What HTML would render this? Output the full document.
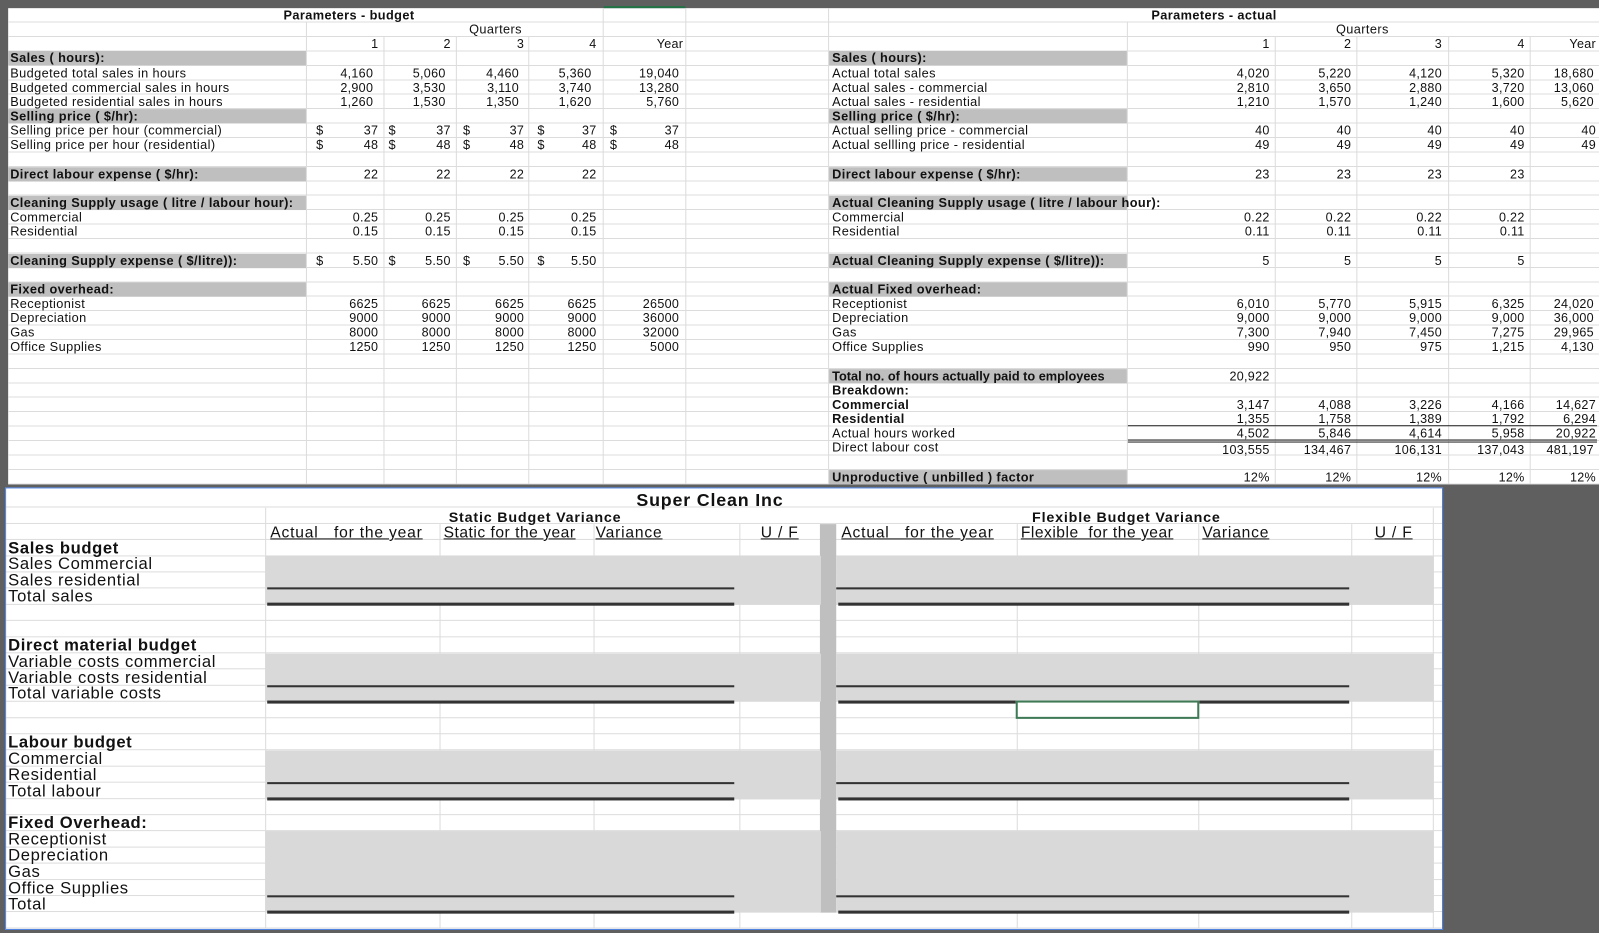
<!DOCTYPE html>
<html><head><meta charset="utf-8"><style>
*{margin:0;padding:0;box-sizing:border-box}
body{width:1599px;height:933px;background:#5f5f5f;position:relative;overflow:hidden;font-family:"Liberation Sans",sans-serif;color:#111}
#w{position:absolute;left:0;top:0;width:1568px;height:915px;transform:scale(1.0198,1.0197);transform-origin:0 0}
.a{position:absolute;white-space:nowrap}
#top{position:absolute;left:8px;top:8px;width:1560px;height:467px;background:#fff;background-image:repeating-linear-gradient(to bottom,transparent 0,transparent 13.15px,#dcdcdc 13.15px,#dcdcdc 14.15px)}
.t{position:absolute;white-space:nowrap;font-size:12.5px;letter-spacing:.4px;line-height:14px;height:14px}
.r{position:absolute;white-space:nowrap;font-size:12.3px;letter-spacing:.3px;line-height:14px;height:14px;width:80px;text-align:right}
.b{font-weight:bold}
.g{position:absolute;background:#bfbfbf;height:14px}
.v{position:absolute;width:1px;background:#dcdcdc}
#bot{position:absolute;left:5px;top:478px;width:1410px;height:434px;background:#fff;border:1px solid #4a7fe0;background-image:repeating-linear-gradient(to bottom,transparent 0,transparent 14.87px,#dcdcdc 14.87px,#dcdcdc 15.87px);background-position:0 3px}
.L{position:absolute;white-space:nowrap;font-size:16.3px;letter-spacing:.6px;line-height:16px;left:8px}
.gb{position:absolute;background:#d9d9d9}
.hl{position:absolute;height:1.5px;background:#333}
.hk{position:absolute;height:3px;background:#333}
.u{text-decoration:underline}
.h{font-size:15.3px;letter-spacing:.8px;line-height:16px}
</style></head><body><div id="w">
<div id="top"></div>
<div class="v" style="left:300px;top:22px;height:453px"></div>
<div class="v" style="left:376px;top:36px;height:439px"></div>
<div class="v" style="left:447px;top:36px;height:439px"></div>
<div class="v" style="left:518px;top:36px;height:439px"></div>
<div class="v" style="left:591px;top:8px;height:467px"></div>
<div class="v" style="left:672px;top:8px;height:467px"></div>
<div class="v" style="left:812px;top:8px;height:467px"></div>
<div class="v" style="left:1105px;top:22px;height:453px"></div>
<div class="v" style="left:1250px;top:36px;height:439px"></div>
<div class="v" style="left:1330px;top:36px;height:439px"></div>
<div class="v" style="left:1420px;top:36px;height:439px"></div>
<div class="v" style="left:1500px;top:36px;height:439px"></div>
<div class="a" style="left:592px;top:6px;width:80px;height:2px;background:#217346"></div>
<div class="g" style="left:8px;top:50px;width:292px"></div>
<div class="g" style="left:8px;top:107px;width:292px"></div>
<div class="g" style="left:8px;top:164px;width:292px"></div>
<div class="g" style="left:8px;top:192px;width:292px"></div>
<div class="g" style="left:8px;top:249px;width:292px"></div>
<div class="g" style="left:8px;top:277px;width:292px"></div>
<div class="g" style="left:813px;top:50px;width:292px"></div>
<div class="g" style="left:813px;top:107px;width:292px"></div>
<div class="g" style="left:813px;top:164px;width:292px"></div>
<div class="g" style="left:813px;top:192px;width:292px"></div>
<div class="g" style="left:813px;top:249px;width:292px"></div>
<div class="g" style="left:813px;top:277px;width:292px"></div>
<div class="g" style="left:813px;top:362px;width:292px"></div>
<div class="g" style="left:813px;top:461px;width:292px"></div>

<div class="t b" style="left:278px;top:8px">Parameters - budget</div>
<div class="t" style="left:460px;top:22px">Quarters</div>
<div class="r" style="left:291px;top:36px">1</div><div class="r" style="left:362px;top:36px">2</div><div class="r" style="left:434px;top:36px">3</div><div class="r" style="left:505px;top:36px">4</div><div class="r" style="left:590px;top:36px">Year</div>
<div class="t b" style="left:10px;top:50px">Sales ( hours):</div>
<div class="t" style="left:10px;top:65px">Budgeted total sales in hours</div>
<div class="t" style="left:10px;top:79px">Budgeted commercial sales in hours</div>
<div class="t" style="left:10px;top:93px">Budgeted residential sales in hours</div>
<div class="t b" style="left:10px;top:107px">Selling price ( $/hr):</div>
<div class="t" style="left:10px;top:121px">Selling price per hour (commercial)</div>
<div class="t" style="left:10px;top:135px">Selling price per hour (residential)</div>
<div class="t b" style="left:10px;top:164px">Direct labour expense ( $/hr):</div>
<div class="t b" style="left:10px;top:192px">Cleaning Supply usage ( litre / labour hour):</div>
<div class="t" style="left:10px;top:206px">Commercial</div>
<div class="t" style="left:10px;top:220px">Residential</div>
<div class="t b" style="left:10px;top:249px">Cleaning Supply expense ( $/litre)):</div>
<div class="t b" style="left:10px;top:277px">Fixed overhead:</div>
<div class="t" style="left:10px;top:291px">Receptionist</div>
<div class="t" style="left:10px;top:305px">Depreciation</div>
<div class="t" style="left:10px;top:319px">Gas</div>
<div class="t" style="left:10px;top:333px">Office Supplies</div>

<div class="r" style="left:286px;top:65px">4,160</div><div class="r" style="left:357px;top:65px">5,060</div><div class="r" style="left:429px;top:65px">4,460</div><div class="r" style="left:500px;top:65px">5,360</div><div class="r" style="left:586px;top:65px">19,040</div>
<div class="r" style="left:286px;top:79px">2,900</div><div class="r" style="left:357px;top:79px">3,530</div><div class="r" style="left:429px;top:79px">3,110</div><div class="r" style="left:500px;top:79px">3,740</div><div class="r" style="left:586px;top:79px">13,280</div>
<div class="r" style="left:286px;top:93px">1,260</div><div class="r" style="left:357px;top:93px">1,530</div><div class="r" style="left:429px;top:93px">1,350</div><div class="r" style="left:500px;top:93px">1,620</div><div class="r" style="left:586px;top:93px">5,760</div>
<div class="t" style="left:310px;top:121px">$</div><div class="t" style="left:381px;top:121px">$</div><div class="t" style="left:454px;top:121px">$</div><div class="t" style="left:527px;top:121px">$</div><div class="t" style="left:598px;top:121px">$</div>
<div class="t" style="left:310px;top:135px">$</div><div class="t" style="left:381px;top:135px">$</div><div class="t" style="left:454px;top:135px">$</div><div class="t" style="left:527px;top:135px">$</div><div class="t" style="left:598px;top:135px">$</div>
<div class="r" style="left:291px;top:121px">37</div><div class="r" style="left:362px;top:121px">37</div><div class="r" style="left:434px;top:121px">37</div><div class="r" style="left:505px;top:121px">37</div><div class="r" style="left:586px;top:121px">37</div>
<div class="r" style="left:291px;top:135px">48</div><div class="r" style="left:362px;top:135px">48</div><div class="r" style="left:434px;top:135px">48</div><div class="r" style="left:505px;top:135px">48</div><div class="r" style="left:586px;top:135px">48</div>
<div class="r" style="left:291px;top:164px">22</div><div class="r" style="left:362px;top:164px">22</div><div class="r" style="left:434px;top:164px">22</div><div class="r" style="left:505px;top:164px">22</div>
<div class="r" style="left:291px;top:206px">0.25</div><div class="r" style="left:362px;top:206px">0.25</div><div class="r" style="left:434px;top:206px">0.25</div><div class="r" style="left:505px;top:206px">0.25</div>
<div class="r" style="left:291px;top:220px">0.15</div><div class="r" style="left:362px;top:220px">0.15</div><div class="r" style="left:434px;top:220px">0.15</div><div class="r" style="left:505px;top:220px">0.15</div>
<div class="t" style="left:310px;top:249px">$</div><div class="t" style="left:381px;top:249px">$</div><div class="t" style="left:454px;top:249px">$</div><div class="t" style="left:527px;top:249px">$</div>
<div class="r" style="left:291px;top:249px">5.50</div><div class="r" style="left:362px;top:249px">5.50</div><div class="r" style="left:434px;top:249px">5.50</div><div class="r" style="left:505px;top:249px">5.50</div>
<div class="r" style="left:291px;top:291px">6625</div><div class="r" style="left:362px;top:291px">6625</div><div class="r" style="left:434px;top:291px">6625</div><div class="r" style="left:505px;top:291px">6625</div><div class="r" style="left:586px;top:291px">26500</div>
<div class="r" style="left:291px;top:305px">9000</div><div class="r" style="left:362px;top:305px">9000</div><div class="r" style="left:434px;top:305px">9000</div><div class="r" style="left:505px;top:305px">9000</div><div class="r" style="left:586px;top:305px">36000</div>
<div class="r" style="left:291px;top:319px">8000</div><div class="r" style="left:362px;top:319px">8000</div><div class="r" style="left:434px;top:319px">8000</div><div class="r" style="left:505px;top:319px">8000</div><div class="r" style="left:586px;top:319px">32000</div>
<div class="r" style="left:291px;top:333px">1250</div><div class="r" style="left:362px;top:333px">1250</div><div class="r" style="left:434px;top:333px">1250</div><div class="r" style="left:505px;top:333px">1250</div><div class="r" style="left:586px;top:333px">5000</div>

<div class="t b" style="left:1129px;top:8px">Parameters - actual</div>
<div class="t" style="left:1310px;top:22px">Quarters</div>
<div class="r" style="left:1165px;top:36px">1</div><div class="r" style="left:1245px;top:36px">2</div><div class="r" style="left:1334px;top:36px">3</div><div class="r" style="left:1415px;top:36px">4</div><div class="r" style="left:1485px;top:36px">Year</div>
<div class="t b" style="left:816px;top:50px">Sales ( hours):</div>
<div class="t" style="left:816px;top:65px">Actual total  sales</div>
<div class="t" style="left:816px;top:79px">Actual sales - commercial</div>
<div class="t" style="left:816px;top:93px">Actual sales - residential</div>
<div class="t b" style="left:816px;top:107px">Selling price ( $/hr):</div>
<div class="t" style="left:816px;top:121px">Actual selling price - commercial</div>
<div class="t" style="left:816px;top:135px">Actual sellling price - residential</div>
<div class="t b" style="left:816px;top:164px">Direct labour expense ( $/hr):</div>
<div class="t b" style="left:816px;top:192px">Actual Cleaning Supply usage ( litre / labour hour):</div>
<div class="t" style="left:816px;top:206px">Commercial</div>
<div class="t" style="left:816px;top:220px">Residential</div>
<div class="t b" style="left:816px;top:249px">Actual Cleaning Supply expense ( $/litre)):</div>
<div class="t b" style="left:816px;top:277px">Actual Fixed overhead:</div>
<div class="t" style="left:816px;top:291px">Receptionist</div>
<div class="t" style="left:816px;top:305px">Depreciation</div>
<div class="t" style="left:816px;top:319px">Gas</div>
<div class="t" style="left:816px;top:333px">Office Supplies</div>
<div class="t b" style="left:816px;top:362px;letter-spacing:0">Total no. of hours actually paid to employees</div>
<div class="t b" style="left:816px;top:376px">Breakdown:</div>
<div class="t b" style="left:816px;top:390px">Commercial</div>
<div class="t b" style="left:816px;top:404px">Residential</div>
<div class="t" style="left:816px;top:418px">Actual hours worked</div>
<div class="t" style="left:816px;top:432px">Direct labour cost</div>
<div class="t b" style="left:816px;top:461px">Unproductive ( unbilled ) factor</div>

<div class="r" style="left:1165px;top:65px">4,020</div><div class="r" style="left:1245px;top:65px">5,220</div><div class="r" style="left:1334px;top:65px">4,120</div><div class="r" style="left:1415px;top:65px">5,320</div><div class="r" style="left:1483px;top:65px">18,680</div>
<div class="r" style="left:1165px;top:79px">2,810</div><div class="r" style="left:1245px;top:79px">3,650</div><div class="r" style="left:1334px;top:79px">2,880</div><div class="r" style="left:1415px;top:79px">3,720</div><div class="r" style="left:1483px;top:79px">13,060</div>
<div class="r" style="left:1165px;top:93px">1,210</div><div class="r" style="left:1245px;top:93px">1,570</div><div class="r" style="left:1334px;top:93px">1,240</div><div class="r" style="left:1415px;top:93px">1,600</div><div class="r" style="left:1483px;top:93px">5,620</div>
<div class="r" style="left:1165px;top:121px">40</div><div class="r" style="left:1245px;top:121px">40</div><div class="r" style="left:1334px;top:121px">40</div><div class="r" style="left:1415px;top:121px">40</div><div class="r" style="left:1485px;top:121px">40</div>
<div class="r" style="left:1165px;top:135px">49</div><div class="r" style="left:1245px;top:135px">49</div><div class="r" style="left:1334px;top:135px">49</div><div class="r" style="left:1415px;top:135px">49</div><div class="r" style="left:1485px;top:135px">49</div>
<div class="r" style="left:1165px;top:164px">23</div><div class="r" style="left:1245px;top:164px">23</div><div class="r" style="left:1334px;top:164px">23</div><div class="r" style="left:1415px;top:164px">23</div>
<div class="r" style="left:1165px;top:206px">0.22</div><div class="r" style="left:1245px;top:206px">0.22</div><div class="r" style="left:1334px;top:206px">0.22</div><div class="r" style="left:1415px;top:206px">0.22</div>
<div class="r" style="left:1165px;top:220px">0.11</div><div class="r" style="left:1245px;top:220px">0.11</div><div class="r" style="left:1334px;top:220px">0.11</div><div class="r" style="left:1415px;top:220px">0.11</div>
<div class="r" style="left:1165px;top:249px">5</div><div class="r" style="left:1245px;top:249px">5</div><div class="r" style="left:1334px;top:249px">5</div><div class="r" style="left:1415px;top:249px">5</div>
<div class="r" style="left:1165px;top:291px">6,010</div><div class="r" style="left:1245px;top:291px">5,770</div><div class="r" style="left:1334px;top:291px">5,915</div><div class="r" style="left:1415px;top:291px">6,325</div><div class="r" style="left:1483px;top:291px">24,020</div>
<div class="r" style="left:1165px;top:305px">9,000</div><div class="r" style="left:1245px;top:305px">9,000</div><div class="r" style="left:1334px;top:305px">9,000</div><div class="r" style="left:1415px;top:305px">9,000</div><div class="r" style="left:1483px;top:305px">36,000</div>
<div class="r" style="left:1165px;top:319px">7,300</div><div class="r" style="left:1245px;top:319px">7,940</div><div class="r" style="left:1334px;top:319px">7,450</div><div class="r" style="left:1415px;top:319px">7,275</div><div class="r" style="left:1483px;top:319px">29,965</div>
<div class="r" style="left:1165px;top:333px">990</div><div class="r" style="left:1245px;top:333px">950</div><div class="r" style="left:1334px;top:333px">975</div><div class="r" style="left:1415px;top:333px">1,215</div><div class="r" style="left:1483px;top:333px">4,130</div>
<div class="r" style="left:1165px;top:362px">20,922</div>
<div class="r" style="left:1165px;top:390px">3,147</div><div class="r" style="left:1245px;top:390px">4,088</div><div class="r" style="left:1334px;top:390px">3,226</div><div class="r" style="left:1415px;top:390px">4,166</div><div class="r" style="left:1485px;top:390px">14,627</div>
<div class="r" style="left:1165px;top:404px">1,355</div><div class="r" style="left:1245px;top:404px">1,758</div><div class="r" style="left:1334px;top:404px">1,389</div><div class="r" style="left:1415px;top:404px">1,792</div><div class="r" style="left:1485px;top:404px">6,294</div>
<div class="r" style="left:1165px;top:418px">4,502</div><div class="r" style="left:1245px;top:418px">5,846</div><div class="r" style="left:1334px;top:418px">4,614</div><div class="r" style="left:1415px;top:418px">5,958</div><div class="r" style="left:1485px;top:418px">20,922</div>
<div class="r" style="left:1165px;top:434px">103,555</div><div class="r" style="left:1245px;top:434px">134,467</div><div class="r" style="left:1334px;top:434px">106,131</div><div class="r" style="left:1415px;top:434px">137,043</div><div class="r" style="left:1483px;top:434px">481,197</div>
<div class="r" style="left:1165px;top:461px">12%</div><div class="r" style="left:1245px;top:461px">12%</div><div class="r" style="left:1334px;top:461px">12%</div><div class="r" style="left:1415px;top:461px">12%</div><div class="r" style="left:1485px;top:461px">12%</div>
<div class="a" style="left:1106px;top:417px;width:460px;height:1px;background:#222"></div>
<div class="a" style="left:1106px;top:431px;width:460px;height:1px;background:#222"></div>
<div class="a" style="left:1106px;top:433px;width:460px;height:1px;background:#222"></div>

<div id="bot"></div>
<div class="a" style="left:804px;top:514px;width:16px;height:381px;background:#bfbfbf"></div>
<div class="v" style="left:260px;top:498px;height:412px"></div>
<div class="v" style="left:431px;top:514px;height:396px"></div>
<div class="v" style="left:582px;top:514px;height:396px"></div>
<div class="v" style="left:725px;top:514px;height:396px"></div>
<div class="v" style="left:997px;top:514px;height:396px"></div>
<div class="v" style="left:1175px;top:514px;height:396px"></div>
<div class="v" style="left:1325px;top:514px;height:396px"></div>
<div class="v" style="left:1405px;top:498px;height:412px"></div>
<div class="gb" style="left:260px;top:545px;width:545px;height:48px"></div>
<div class="gb" style="left:260px;top:641px;width:545px;height:47px"></div>
<div class="gb" style="left:260px;top:736px;width:545px;height:48px"></div>
<div class="gb" style="left:260px;top:815px;width:545px;height:80px"></div>
<div class="gb" style="left:820px;top:545px;width:586px;height:48px"></div>
<div class="gb" style="left:820px;top:641px;width:586px;height:47px"></div>
<div class="gb" style="left:820px;top:736px;width:586px;height:48px"></div>
<div class="gb" style="left:820px;top:815px;width:586px;height:80px"></div>

<div class="hl" style="left:262px;top:576px;width:458px"></div><div class="hk" style="left:262px;top:591px;width:458px"></div>
<div class="hl" style="left:262px;top:672px;width:458px"></div><div class="hk" style="left:262px;top:687px;width:458px"></div>
<div class="hl" style="left:262px;top:767px;width:458px"></div><div class="hk" style="left:262px;top:782px;width:458px"></div>
<div class="hl" style="left:262px;top:878px;width:458px"></div><div class="hk" style="left:262px;top:893px;width:458px"></div>
<div class="hl" style="left:820px;top:576px;width:503px"></div><div class="hk" style="left:822px;top:591px;width:501px"></div>
<div class="hl" style="left:820px;top:672px;width:503px"></div><div class="hk" style="left:822px;top:687px;width:501px"></div>
<div class="hl" style="left:820px;top:767px;width:503px"></div><div class="hk" style="left:822px;top:782px;width:501px"></div>
<div class="hl" style="left:820px;top:878px;width:503px"></div><div class="hk" style="left:822px;top:893px;width:501px"></div>
<div class="a" style="left:996px;top:687px;width:180px;height:18px;border:2px solid #3e7a56;background:#fff"></div>

<div class="a b" style="left:624px;top:481px;font-size:17.5px;letter-spacing:.8px;line-height:18px">Super Clean Inc</div>
<div class="a b h" style="left:440px;top:499px;font-size:14px">Static Budget Variance</div>
<div class="a b h" style="left:1012px;top:499px;font-size:14px">Flexible Budget Variance</div>
<div class="a u h" style="left:265px;top:515px">Actual&nbsp;&nbsp; for the year</div>
<div class="a u h" style="left:435px;top:515px;letter-spacing:.5px">Static for the year</div>
<div class="a u h" style="left:584px;top:515px">Variance</div>
<div class="a u h" style="left:746px;top:515px">U / F</div>
<div class="a u h" style="left:825px;top:515px">Actual&nbsp;&nbsp; for the year</div>
<div class="a u h" style="left:1001px;top:515px;letter-spacing:.5px">Flexible&nbsp; for the year</div>
<div class="a u h" style="left:1179px;top:515px">Variance</div>
<div class="a u h" style="left:1348px;top:515px">U / F</div>

<div class="L b" style="top:530px">Sales budget</div>
<div class="L" style="top:545px">Sales Commercial</div>
<div class="L" style="top:561px">Sales residential</div>
<div class="L" style="top:577px">Total sales</div>
<div class="L b" style="top:625px">Direct material budget</div>
<div class="L" style="top:641px">Variable costs commercial</div>
<div class="L" style="top:657px">Variable costs residential</div>
<div class="L" style="top:672px">Total variable costs</div>
<div class="L b" style="top:720px">Labour budget</div>
<div class="L" style="top:736px">Commercial</div>
<div class="L" style="top:752px">Residential</div>
<div class="L" style="top:768px">Total labour</div>
<div class="L b" style="top:799px">Fixed Overhead:</div>
<div class="L" style="top:815px">Receptionist</div>
<div class="L" style="top:831px">Depreciation</div>
<div class="L" style="top:847px">Gas</div>
<div class="L" style="top:863px">Office Supplies</div>
<div class="L" style="top:879px">Total</div>
</div></body></html>
